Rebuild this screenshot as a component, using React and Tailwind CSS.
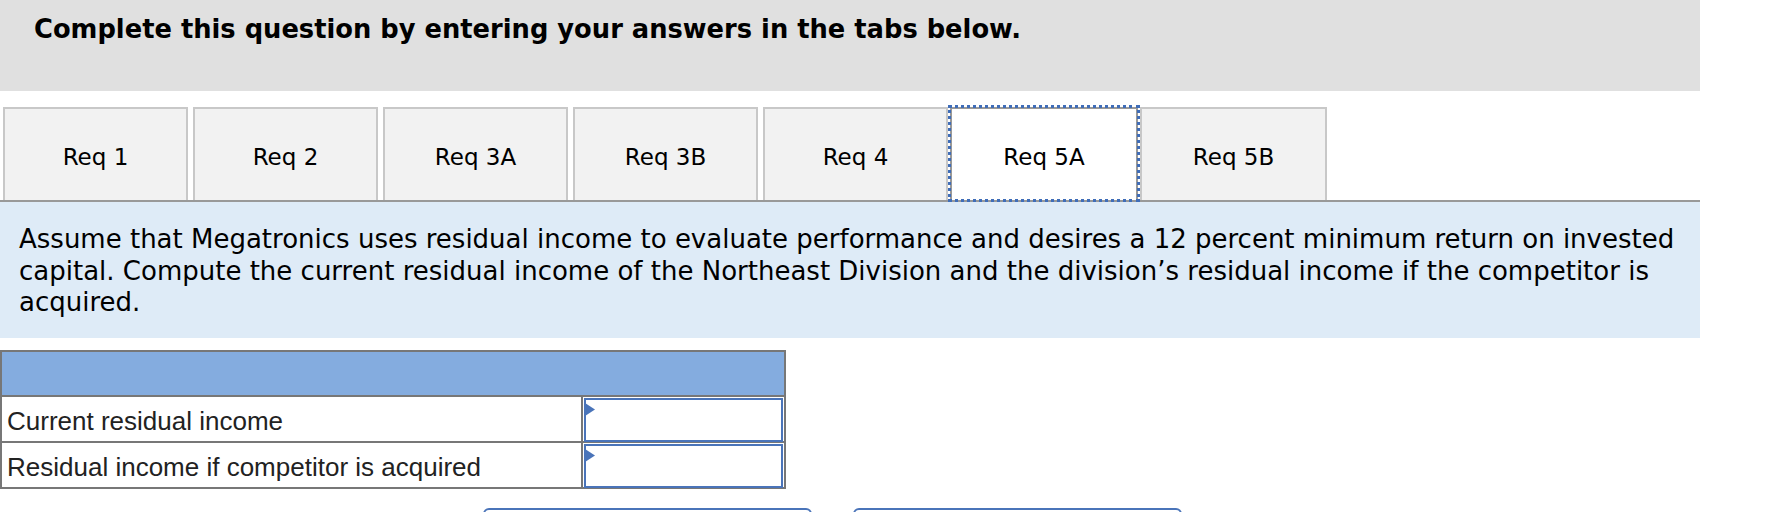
import React from "react";

const tabs = ["Req 1", "Req 2", "Req 3A", "Req 3B", "Req 4", "Req 5A", "Req 5B"];

const rows = ["Current residual income", "Residual income if competitor is acquired"];

function Tab({ label, active, afterActive }) {
    if (active) {
        return (
            <div className="relative z-10 -ml-[3px] flex h-[93px] w-[188px] items-center justify-center border-2 border-b-0 border-[#999999] bg-white pt-[6px] outline-[3px] outline-offset-[-1px] outline-dotted outline-[#3f6db8]">
                {label}
            </div>
        );
    }
    return (
        <div
            className={
                afterActive
                    ? "-ml-[3px] flex h-[93px] w-[187px] items-center justify-center border-2 border-b-0 border-[#c8c8c8] bg-[#f2f2f2] pt-[6px]"
                    : "flex h-[93px] w-[185px] items-center justify-center border-2 border-b-0 border-[#c8c8c8] bg-[#f2f2f2] pt-[6px]"
            }
        >
            {label}
        </div>
    );
}

function AnswerCell() {
    return (
        <div className="relative m-[1px] h-[44px] border-2 border-[#4a74b9] bg-white">
            <svg
                className="absolute left-[-1px] top-[3px]"
                width="11"
                height="13"
                viewBox="0 0 11 13"
            >
                <polygon points="0,0 10,6.5 0,13" fill="#4a74b9" />
            </svg>
        </div>
    );
}

export default function App() {
    return (
        <div className="min-h-[512px] bg-white text-black">
            <div className="w-[1700px]">
                <div className="h-[91px] bg-[#e0e0e0] pl-[34px] pt-[14px]">
                    <h3 className="font-['DejaVu_Sans',Verdana,sans-serif] text-[25.75px] font-bold leading-[30px]">
                        Complete this question by entering your answers in the tabs below.
                    </h3>
                </div>

                <div className="mt-[16px] flex gap-[5px] pl-[3px] font-['DejaVu_Sans',Verdana,sans-serif] text-[23px]">
                    {tabs.map((t, i) => (
                        <Tab
                            key={t}
                            label={t}
                            active={t === "Req 5A"}
                            afterActive={i > 0 && tabs[i - 1] === "Req 5A"}
                        />
                    ))}
                </div>

                <div className="border-t-2 border-[#999999] bg-[#deebf7] pb-[19px] pl-[19px] pr-[10px] pt-[22px] font-['DejaVu_Sans',Verdana,sans-serif] text-[26px] leading-[31.5px]">
                    Assume that Megatronics uses residual income to evaluate performance and desires a 12 percent
                    minimum return on invested capital. Compute the current residual income of the Northeast
                    Division and the division’s residual income if the competitor is acquired.
                </div>
            </div>

            <div className="mt-[12px] w-[786px] border-2 border-[#777777] font-['Liberation_Sans',Arial,sans-serif] text-[26px] text-[#222222]">
                <div className="h-[45px] border-b-2 border-[#777777] bg-[#84acdf]" />
                {rows.map((r, i) => (
                    <div
                        key={r}
                        className={
                            i === 0
                                ? "grid h-[46px] grid-cols-[581px_1fr] border-b-2 border-[#777777]"
                                : "grid h-[44px] grid-cols-[581px_1fr]"
                        }
                    >
                        <div className="flex items-center border-r-2 border-[#777777] pl-[5px] pt-[2px] leading-none">
                            {r}
                        </div>
                        <AnswerCell />
                    </div>
                ))}
            </div>

            <div className="mt-[19px] flex gap-[41px] pl-[483px]">
                <div className="h-[40px] w-[329px] rounded-md border-2 border-[#4a74b9] bg-white" />
                <div className="h-[40px] w-[329px] rounded-md border-2 border-[#4a74b9] bg-white" />
            </div>
        </div>
    );
}
